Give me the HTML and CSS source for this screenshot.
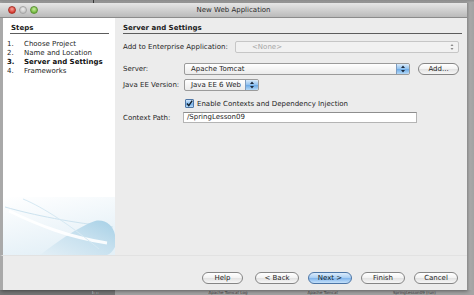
FILE: index.html
```html
<!DOCTYPE html>
<html lang="en">
<head>
    <meta charset="UTF-8">
    <meta name="viewport" content="width=device-width, initial-scale=1.0">
    <title>New Web Application</title>
    <link rel="stylesheet" href="styles.css">
</head>
<body>
    <div class="desktop-top"><span class="desktop-tick"></span></div>

    <div class="screen">
        <div class="window">
            <div class="titlebar">
                <div class="lights">
                    <span class="light close"></span>
                    <span class="light minimize"></span>
                    <span class="light zoom"></span>
                </div>
                <div class="title">New Web Application</div>
                <div></div>
            </div>

            <div class="dialog-body">
                <div class="steps-panel">
                    <div class="panel-heading steps-heading">Steps</div>
                    <ol class="steps-list">
                        <li><span class="step-num">1.</span>Choose Project</li>
                        <li><span class="step-num">2.</span>Name and Location</li>
                        <li class="current"><span class="step-num">3.</span>Server and Settings</li>
                        <li><span class="step-num">4.</span>Frameworks</li>
                    </ol>
                    <svg class="steps-art" width="112" height="58" viewBox="0 0 112 58">
                        <defs>
                            <linearGradient id="tint" x1="0" y1="0" x2="0.4" y2="1">
                                <stop offset="0" stop-color="#ffffff"/>
                                <stop offset="1" stop-color="#e4f0f7"/>
                            </linearGradient>
                            <linearGradient id="wedge" x1="0" y1="1" x2="1" y2="0">
                                <stop offset="0" stop-color="#e3eff6"/>
                                <stop offset="0.6" stop-color="#c4dfee"/>
                                <stop offset="1" stop-color="#a6d0e6"/>
                            </linearGradient>
                        </defs>
                        <rect width="112" height="58" fill="url(#tint)"/>
                        <path d="M2 10 C30 18 70 26 110 30" stroke="#cde3ef" stroke-width="1" fill="none"/>
                        <path d="M37 58 C55 44 75 30 92 24 C102 22 110 28 112 38 L112 50 C110 54 107 57 104 58 Z" fill="url(#wedge)"/>
                        <path d="M6 14 C35 28 65 40 104 46" stroke="#ffffff" stroke-width="3" fill="none" opacity="0.9"/>
                        <path d="M20 2 C40 10 70 30 96 52" stroke="#d6e9f3" stroke-width="1" fill="none"/>
                    </svg>
                </div>

                <div class="main-panel">
                    <div class="panel-heading">Server and Settings</div>

                    <div class="form-row enterprise-row">
                        <span class="label enterprise-label">Add to Enterprise Application:</span>
                        <div class="combo disabled enterprise-combo">
                            <span class="combo-text">&lt;None&gt;</span>
                            <span class="stepper">
                                <svg width="12" height="10" viewBox="0 0 12 10"><path d="M4.5 4 L6 2 L7.5 4 Z M4.5 6 L6 8 L7.5 6 Z" fill="#8a8a8a"/></svg>
                            </span>
                        </div>
                    </div>

                    <div class="form-row server-row">
                        <span class="label">Server:</span>
                        <div class="combo server-combo">
                            <span class="combo-text">Apache Tomcat</span>
                            <span class="stepper">
                                <svg width="12" height="10" viewBox="0 0 12 10"><path d="M4 4 L6 1.5 L8 4 Z M4 6 L6 8.5 L8 6 Z" fill="#1b2a3c"/></svg>
                            </span>
                        </div>
                        <button class="btn add-btn">Add...</button>
                    </div>

                    <div class="form-row version-row">
                        <span class="label">Java EE Version:</span>
                        <div class="combo version-combo">
                            <span class="combo-text">Java EE 6 Web</span>
                            <span class="stepper">
                                <svg width="12" height="10" viewBox="0 0 12 10"><path d="M4 4 L6 1.5 L8 4 Z M4 6 L6 8.5 L8 6 Z" fill="#1b2a3c"/></svg>
                            </span>
                        </div>
                    </div>

                    <div class="form-row check-row">
                        <span class="label"></span>
                        <span class="checkbox">
                            <svg width="9" height="9" viewBox="0 0 9 9"><path d="M2 4.5 L3.8 6.6 L7.2 1.6" stroke="#15202c" stroke-width="1.4" fill="none"/></svg>
                        </span>
                        <span class="check-text">Enable Contexts and Dependency Injection</span>
                    </div>

                    <div class="form-row path-row">
                        <span class="label">Context Path:</span>
                        <div class="text-field">/SpringLesson09</div>
                    </div>
                </div>
            </div>

            <div class="button-bar">
                <button class="btn help-btn">Help</button>
                <button class="btn">&lt; Back</button>
                <button class="btn default">Next &gt;</button>
                <button class="btn">Finish</button>
                <button class="btn">Cancel</button>
            </div>
        </div>
        <div class="desktop-side"></div>
    </div>

    <div class="desktop-bottom">
        <span class="task task-a">I: ::</span>
        <span class="task task-b">Apache Tomcat Log</span>
        <span class="task task-c">Apache Tomcat</span>
        <span class="task task-d">SpringLesson09 (run)</span>
    </div>
</body>
</html>
```

FILE: styles.css
```css
* {
    box-sizing: border-box;
}

html, body {
    margin: 0;
}

body {
    width: 474px;
    height: 295px;
    overflow: hidden;
    background-color: #9e9e9e;
    font-family: "DejaVu Sans", Verdana, sans-serif;
    font-size: 7px;
    color: #1e1e1e;
}

.desktop-top {
    height: 3px;
    display: flex;
    background: linear-gradient(#8c8c8c, #ababab);
}

.desktop-tick {
    margin-left: 93px;
    width: 1px;
    background-color: #3c3c3c;
}

.screen {
    display: flex;
    height: 287px;
}

.window {
    width: 467px;
    display: flex;
    flex-direction: column;
    background-color: #ececec;
    box-shadow: 1px 1px 4px rgba(0,0,0,0.45);
}

.desktop-side {
    flex: 1;
    background: linear-gradient(90deg, #8a8a8a, #a8a8a8 40%, #a2a2a2);
}

/* title bar */

.titlebar {
    height: 15px;
    display: grid;
    grid-template-columns: 1fr auto 1fr;
    align-items: center;
    background: linear-gradient(#e6e6e6, #bababa);
    border-bottom: 1px solid #8b8b8b;
}

.lights {
    display: flex;
    gap: 3px;
    padding-left: 8px;
}

.light {
    width: 8px;
    height: 8px;
    border-radius: 50%;
}

.light.close {
    background: radial-gradient(circle at 50% 35%, #f6a59d, #d93a30 70%);
    border: 1px solid #a83229;
}

.light.minimize {
    background: radial-gradient(circle at 50% 35%, #eeeeee, #c4c4c4 70%);
    border: 1px solid #a5a5a5;
}

.light.zoom {
    background: radial-gradient(circle at 50% 35%, #c7ef9f, #74b940 70%);
    border: 1px solid #5a9134;
}

.title {
    color: #2a2a2a;
}

/* body */

.dialog-body {
    height: 237px;
    display: flex;
    border-left: 3px solid #a9a9a9;
}

.steps-panel {
    width: 112px;
    display: flex;
    flex-direction: column;
    background-color: white;
}

.panel-heading {
    margin-top: 6px;
    line-height: 8px;
    padding-bottom: 1px;
    border-bottom: 1px solid #5c5c5c;
    font-weight: bold;
    color: #202020;
}

.steps-heading {
    margin-left: 7px;
    margin-right: 6px;
    padding-left: 1px;
}

.steps-list {
    list-style: none;
    margin: 6px 0 0 0;
    padding: 0 0 0 4px;
    line-height: 9px;
    color: #262626;
}

.steps-list li.current {
    font-weight: bold;
    color: #111;
}

.step-num {
    display: inline-block;
    width: 17px;
}

.steps-art {
    margin-top: auto;
    display: block;
}

.main-panel {
    flex: 1;
    display: flex;
    flex-direction: column;
    padding: 0 7px 0 8px;
}

.form-row {
    display: flex;
    align-items: center;
    margin-right: 3px;
}

.label {
    width: 61px;
    flex-shrink: 0;
    color: #262626;
}

.enterprise-row {
    margin-top: 7px;
}

.enterprise-label {
    width: 112px;
}

.server-row {
    margin-top: 10px;
}

.version-row {
    margin-top: 4px;
}

.check-row {
    margin-top: 8px;
    height: 9px;
}

.path-row {
    margin-top: 4px;
}

/* combos */

.combo {
    height: 12px;
    display: flex;
    align-items: center;
    background: linear-gradient(#ffffff, #ebebeb);
    border: 1px solid #9b9b9b;
    border-radius: 2px;
    padding-left: 6px;
}

.combo-text {
    flex: 1;
    white-space: nowrap;
}

.enterprise-combo {
    flex: 1;
    padding-left: 16px;
}

.combo.disabled {
    background: #f1f1f1;
    border-color: #c6c6c6;
    color: #a6a6a6;
}

.server-combo {
    width: 226px;
}

.version-combo {
    width: 75px;
}

.stepper {
    width: 13px;
    height: 10px;
    display: flex;
    align-items: center;
    justify-content: center;
    background: linear-gradient(#d9ebfb, #8fc0ee 50%, #6aa9e6 51%, #b5d9f7);
    border-left: 1px solid #7d9cc0;
    border-radius: 0 2px 2px 0;
}

.combo.disabled .stepper {
    background: none;
    border-left: none;
}

/* checkbox + field */

.checkbox {
    width: 9px;
    height: 9px;
    margin-left: 1px;
    display: flex;
    border: 1px solid #4f77a6;
    border-radius: 1px;
    background: linear-gradient(#d4e8fb, #86bbee 50%, #6aa9e6 51%, #b8dbf8);
}

.checkbox svg {
    margin: -1px;
}

.check-text {
    margin-left: 3px;
    color: #1c1c1c;
}

.text-field {
    width: 234px;
    height: 11px;
    margin-left: -1px;
    padding-left: 3px;
    line-height: 9px;
    background-color: white;
    border: 1px solid #b4b4b4;
    border-top-color: #8e8e8e;
    color: #1c1c1c;
}

/* buttons */

.btn {
    width: 44px;
    height: 12px;
    padding: 0;
    font-family: inherit;
    font-size: 7px;
    color: #1e1e1e;
    background: linear-gradient(#ffffff, #f2f2f2 50%, #e2e2e2 51%, #f6f6f6);
    border: 1px solid #858585;
    border-radius: 7px;
    line-height: 10px;
}

.add-btn {
    width: 41px;
    margin-left: 8px;
}

.btn.default {
    background: linear-gradient(#dcecfc, #a7cdf3 50%, #7fb4ec 51%, #c3e0fa);
    border-color: #4d76a6;
    color: #101c2a;
}

.button-bar {
    height: 35px;
    display: flex;
    justify-content: flex-end;
    align-items: flex-start;
    gap: 9px;
    padding: 16px 9px 0 0;
    border-left: 3px solid #a9a9a9;
    border-top: 1px solid #e2e2e2;
}

.help-btn {
    width: 41px;
    margin-right: 3px;
}

/* strip of windows behind the dialog */

.desktop-bottom {
    height: 5px;
    display: flex;
    align-items: center;
    background: linear-gradient(90deg, #777 0, #777 115px, #a4a4a4 115px);
    font-size: 4px;
    line-height: 5px;
    color: #3a3a3a;
    white-space: nowrap;
}

.task-a {
    margin-left: 92px;
    color: #d8d8d8;
}

.task-b {
    margin-left: 110px;
}

.task-c {
    margin-left: 60px;
}

.task-d {
    margin-left: 55px;
}
```
